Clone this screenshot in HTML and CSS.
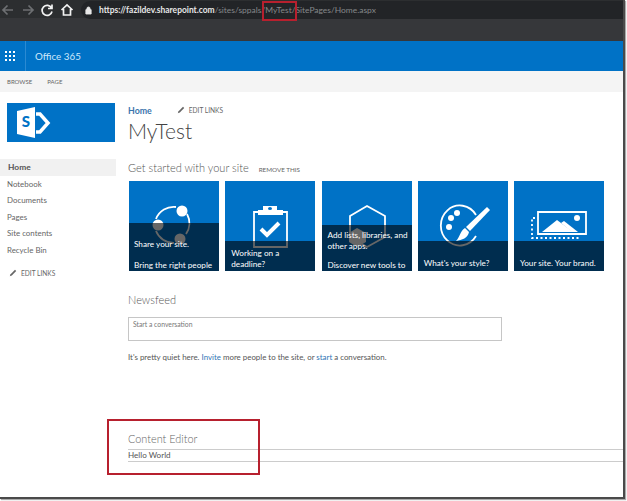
FILE: index.html
```html
<!DOCTYPE html>
<html lang="en">
<head>
<meta charset="utf-8">
<title>MyTest</title>
<link rel="stylesheet" href="styles.css">
</head>
<body>
<div class="frame">
  <header class="browser">
    <div class="toolbar">
      <svg class="nav dim" viewBox="0 0 14 14"><path d="M12 7H2M6.500 2.500 2 7l4.500 4.500"/></svg>
      <svg class="nav dim" viewBox="0 0 14 14"><path d="M2 7h10M7.500 2.500 12 7l-4.500 4.500"/></svg>
      <svg class="nav" viewBox="0 0 14 14"><path d="M11.500 5A5 5 0 1 0 12 8.500M12 1.500V5.500H8"/></svg>
      <svg class="nav" viewBox="0 0 14 14"><path d="M1.500 7 7 1.800 12.500 7M3.500 6v6h7V6"/></svg>
      <div class="address">
        <svg class="lock" viewBox="0 0 8 10"><path d="M1 4h6v5H1zM2.200 4V2.800a1.800 1.800 0 0 1 3.600 0V4"/></svg>
        <span class="url-strong">https://fazildev.sharepoint.com</span><span>/sites/sppals/MyTest/SitePages/Home.aspx</span>
      </div>
    </div>
  </header>
  <div class="suitebar">
    <div class="waffle"><i></i><i></i><i></i><i></i><i></i><i></i><i></i><i></i><i></i></div>
    <div class="brand">Office 365</div>
  </div>
  <nav class="ribbon"><span>BROWSE</span><span>PAGE</span></nav>
  <div class="layout">
    <aside class="side">
      <div class="logo">
        <svg viewBox="0 0 34 32" class="logo-svg">
          <path class="logo-w" d="M0 4 18 0V31L0 27Z"/>
          <text x="9" y="20" class="logo-s">S</text>
          <path class="logo-l" d="M19 7H23L31 16 23 25H19"/>
        </svg>
      </div>
      <ul class="quick">
        <li class="active">Home</li>
        <li>Notebook</li>
        <li>Documents</li>
        <li>Pages</li>
        <li>Site contents</li>
        <li>Recycle Bin</li>
      </ul>
      <div class="edit side-edit"><svg viewBox="0 0 10 10"><path d="M1 9 2 6.500 7.500 1 9 2.500 3.500 8Z"/></svg>EDIT LINKS</div>
    </aside>
    <main class="content">
      <div class="crumbs"><a class="home">Home</a><div class="edit"><svg viewBox="0 0 10 10"><path d="M1 9 2 6.500 7.500 1 9 2.500 3.500 8Z"/></svg>EDIT LINKS</div></div>
      <h1>MyTest</h1>
      <div class="started"><h2>Get started with your site</h2><span>REMOVE THIS</span></div>
      <div class="tiles">
        <div class="tile">
          <svg viewBox="0 0 90 90"><path class="st" d="M27 38A19 19 0 0 1 47 26"/><path class="st" d="M58 33A19 19 0 0 1 57 53"/><path class="st" d="M45 62A19 19 0 0 1 27 50"/><circle class="fl" cx="53" cy="30" r="5.500"/><circle class="fl" cx="29" cy="44" r="5.500"/><circle class="fl" cx="51" cy="58" r="5.500"/></svg>
          <div class="panel p42"><p>Share your site.</p><p class="gap">Bring the right people together.</p></div>
        </div>
        <div class="tile">
          <svg viewBox="0 0 90 90"><path class="st" d="M33 31H29V66H62V31H58"/><path class="fl fe" d="M33 34V29H38V25H52V29H58V34ZM43 27.500a2 1.500 0 0 0 4 0 2 1.500 0 0 0-4 0Z"/><path class="st thick" d="M36 48 42 54 54 42"/></svg>
          <div class="panel p60"><p>Working on a<br>deadline?</p></div>
        </div>
        <div class="tile">
          <svg viewBox="0 0 90 90"><path class="st" d="M45 25 63 35V56L45 66 28 56V35Z"/><path class="fl" d="M35 47 44 52V61L35 66 27 61V52Z"/></svg>
          <div class="panel p44"><p>Add lists, libraries, and<br>other apps.</p><p class="gap">Discover new tools to work with.</p></div>
        </div>
        <div class="tile">
          <svg viewBox="0 0 90 90"><path class="st" d="M58 34A19 20 0 1 0 58 55"/><circle class="fl" cx="39" cy="32" r="3"/><circle class="fl" cx="33" cy="37" r="3"/><circle class="fl" cx="31" cy="46" r="3"/><path class="fl" d="M69 26 72 29 52 50 48 46Z"/><path class="fl" d="M47 47 51 51C50 57 44 59 38 60 42 56 42 50 47 47Z"/></svg>
          <div class="panel p60"><p>What's your style?</p></div>
        </div>
        <div class="tile">
          <svg viewBox="0 0 90 90"><path class="st" d="M24 31H72V53H24Z"/><path class="fl" d="M28 51 43 39 59 51Z"/><path class="fl" d="M47 42 50 40 64 51H58Z"/><circle class="fl" cx="63" cy="37" r="3"/><path class="st dash" d="M21 37H18V57H66"/></svg>
          <div class="panel p60"><p>Your site. Your brand.</p></div>
        </div>
      </div>
      <h2 class="newsfeed">Newsfeed</h2>
      <div class="composer">Start a conversation</div>
      <p class="quiet">It's pretty quiet here. <a>Invite</a> more people to the site, or <a>start</a> a conversation.</p>
      <section class="editor">
        <h2>Content Editor</h2>
        <div class="editor-body">Hello World</div>
      </section>
    </main>
  </div>
  <div class="mark mark-url"></div>
  <div class="mark mark-editor"></div>
</div>
</body>
</html>
```
FILE: styles.css
```css
* { box-sizing: border-box; }
html, body { margin: 0; height: 100%; }
body { background: #fff; font-family: Lato, "Open Sans", "Liberation Sans", sans-serif; color: #444; overflow: hidden; }
.frame { position: relative; width: 625px; height: 499px; border-right: 2px solid #4a4a4a; border-bottom: 2px solid #4a4a4a; box-shadow: 1px 1px 1px #aaa; overflow: hidden; }

.browser { height: 41px; background: linear-gradient(#2c2e30 0, #2c2e30 18px, #36373a 18px); }
.toolbar { height: 20px; display: flex; align-items: center; padding-left: 1px; }
.nav { width: 14px; height: 14px; margin-right: 5.500px; fill: none; stroke: #f2f2f2; stroke-width: 1.700; flex: none; }
.nav.dim { stroke: #6d6f72; }
.address { display: flex; align-items: center; height: 18px; margin-left: 2px; flex: 1; font-size: 8.450px; color: #85888a; background: #222427; border-radius: 9px 0 0 9px; white-space: nowrap; }
.lock { width: 7px; height: 9px; margin: 0 7px 0 4px; fill: #e8e8e8; stroke: #e8e8e8; stroke-width: 1; }
.url-strong { color: #e6e6e6; font-weight: 700; }

.suitebar { height: 30px; background: #0072c6; display: flex; align-items: center; }
.waffle { width: 26px; height: 30px; border-right: 1px solid #2b8ad2; display: grid; grid-template-columns: repeat(3, 2px); grid-auto-rows: 2px; gap: 2px; padding: 10px 0 0 5px; }
.waffle i { background: #fff; }
.brand { margin-left: 9px; font-size: 9.800px; color: #cfe8fb; }

.ribbon { height: 21px; background: #f4f4f4; display: flex; align-items: center; gap: 15px; padding-left: 7px; font-size: 6px; color: #666; }

.layout { display: flex; height: 406px; }
.side { width: 128px; flex: none; padding: 11px 0 0 7px; }
.logo { width: 108px; height: 39px; background: #0072c6; display: flex; align-items: center; padding-left: 10px; }
.logo-svg { width: 34px; height: 32px; }
.logo-w { fill: #fff; }
.logo-s { fill: #0072c6; font-size: 15px; font-weight: 900; text-anchor: middle; font-family: Lato, sans-serif; }
.logo-l { fill: none; stroke: #fff; stroke-width: 3.500; }

.quick { list-style: none; margin: 17px 0 0 -7px; padding: 0; font-size: 7.900px; color: #666; width: 116px; }
.quick li { height: 16.400px; line-height: 16px; padding-left: 7px; }
.quick .active { height: 17px; background: #f1f1f1; color: #555; font-size: 8.400px; font-weight: 700; padding-left: 8px; }
.edit { display: flex; align-items: center; font-size: 6.600px; color: #666; gap: 4px; }
.edit svg { width: 8px; height: 8px; fill: #666; }
.side-edit { margin-top: 11px; padding-left: 2px; }

.content { flex: 1; min-width: 0; }
.crumbs { display: flex; align-items: center; gap: 25px; height: 12px; margin-top: 12px; }
.home { font-size: 8.800px; font-weight: 700; color: #3a75ad; }
h1 { margin: 0; font-size: 21px; font-weight: 300; color: #444; line-height: 30px; }
h2 { margin: 0; font-weight: 300; font-size: 11px; color: #555; }
.started { display: flex; align-items: baseline; gap: 10px; margin-top: 13px; line-height: 17px; }
.started span { font-size: 6.300px; color: #666; }
.tiles { display: flex; gap: 6.250px; margin-top: 3px; margin-left: 1px; }
.tile { position: relative; width: 90px; height: 90px; background: #0072c6; overflow: hidden; flex: none; }
.tile svg { position: absolute; inset: 0; width: 90px; height: 90px; }
.st { fill: none; stroke: #fff; stroke-width: 1.800; }
.st.thick { stroke-width: 4; }
.st.dash { stroke-dasharray: 2 2.500; }
.fl { fill: #fff; }
.fe { fill-rule: evenodd; }
.panel { position: absolute; left: 0; right: 0; bottom: 0; background: rgba(0, 0, 0, .6); color: #fff; font-size: 8.200px; line-height: 10.500px; padding: 0 0 0 6px; }
.panel p { margin: 0; }
.panel .gap { margin-top: 9px; }
.p42 { top: 42px; padding: 16px 0 0 5px; }
.p42 .gap { margin-top: 10px; }
.p44 { top: 44px; padding-top: 5px; }
.p60 { top: 60px; padding-top: 7px; }
.tile:nth-child(n+4) .panel { padding-top: 17px; }

.newsfeed { margin-top: 20px; line-height: 17px; }
.composer { width: 374px; height: 24px; margin-top: 9px; border: 1px solid #c6c6c6; padding: 2px 4px; font-size: 6.800px; color: #777; }
.quiet { margin: 10px 0 0; font-size: 7.900px; color: #555; line-height: 12px; }
.quiet a { color: #2f75b5; }

.editor { margin-top: 68px; }
.editor h2 { font-size: 10.900px; line-height: 15px; color: #666; }
.editor-body { height: 12.500px; margin-top: 3px; border-top: 1px solid #ccc; border-bottom: 1px solid #ccc; font-size: 8.100px; line-height: 11px; color: #555; }

.mark { position: absolute; border: 2px solid #b7202e; }
.mark-url { left: 262px; top: 1px; width: 35px; height: 20px; }
.mark-editor { left: 107px; top: 419px; width: 153px; height: 56px; }
```
